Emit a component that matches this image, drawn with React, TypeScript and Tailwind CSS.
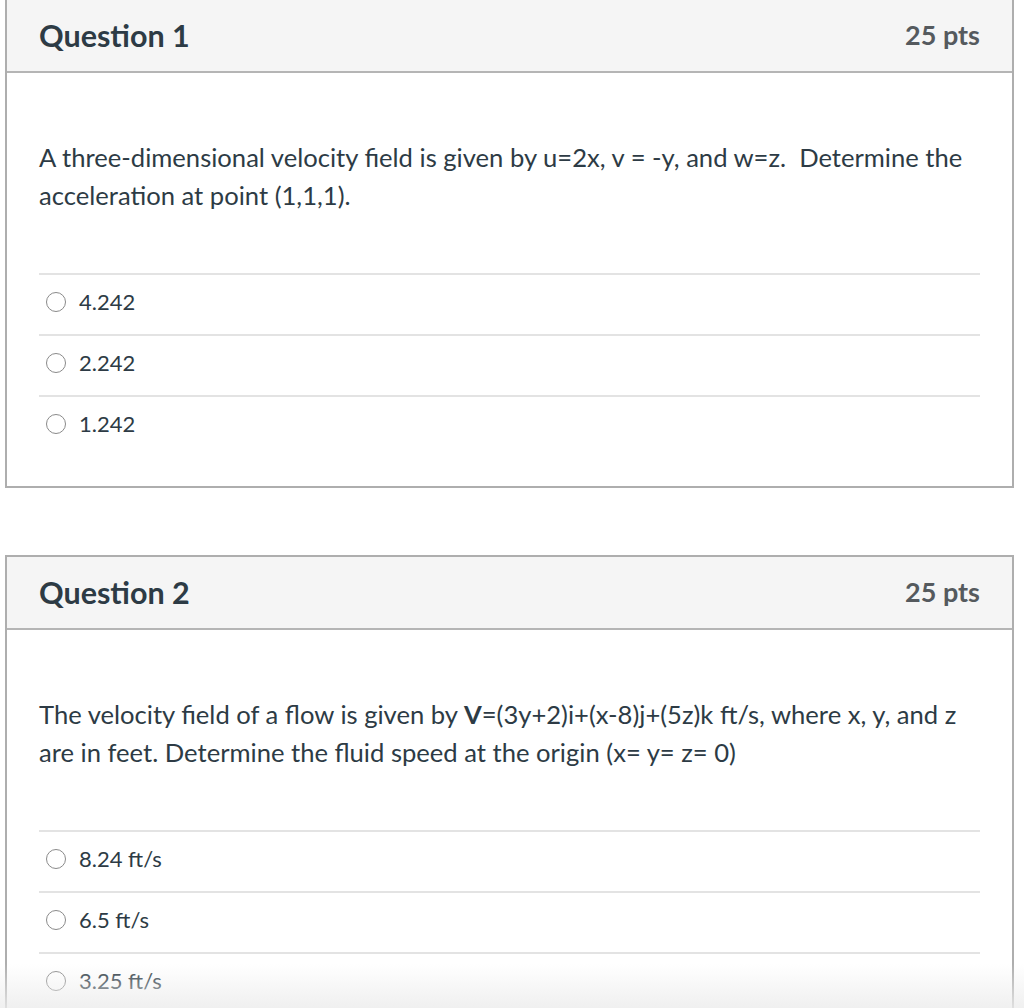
import React from 'react';

interface Question {
  title: string;
  points: string;
  body: React.ReactNode;
  answers: string[];
}

const questions: Question[] = [
  {
    title: 'Question 1',
    points: '25 pts',
    body: (
      <>
        A three-dimensional velocity field is given by u=2x, v = -y, and w=z.&nbsp; Determine the acceleration at point (1,1,1).
      </>
    ),
    answers: ['4.242', '2.242', '1.242'],
  },
  {
    title: 'Question 2',
    points: '25 pts',
    body: (
      <>
        The velocity field of a flow is given by <b>V</b>=(3y+2)i+(x-8)j+(5z)k ft/s, where x, y, and z are in feet. Determine the fluid speed at the origin (x= y= z= 0)
      </>
    ),
    answers: ['8.24 ft/s', '6.5 ft/s', '3.25 ft/s'],
  },
];

const QuestionCard: React.FC<{ q: Question; className?: string }> = ({ q, className = '' }) => (
  <div className={`ml-[5px] w-[1009px] border-2 border-[#aeaeae] bg-white ${className}`}>
    <div className="flex h-[73px] items-center justify-between border-b-2 border-[#b5b5b5] bg-[#f5f5f5] pl-8 pr-[32px]">
      <h2 className="text-[30.5px] font-bold text-[#2d3b45]">{q.title}</h2>
      <span className="text-[27px] font-bold text-[#555a5e]">{q.points}</span>
    </div>
    <div className="px-8 pt-[65px] pb-[30px]">
      <p className="text-[25.6px] leading-[38px] text-[#2d3b45]">{q.body}</p>
      <div className="mt-[59px]">
        {q.answers.map((a) => (
          <div key={a} className="flex h-[61px] items-center border-t-2 border-[#e3e3e3] pb-[6px]">
            <span className="ml-[7px] h-[20px] w-[20px] rounded-full border-[1.5px] border-[#8a8a8a] bg-white" />
            <span className="ml-[13px] text-[22px] text-[#2d3b45]">{a}</span>
          </div>
        ))}
      </div>
    </div>
  </div>
);

export default function App() {
  return (
    <div className="relative h-[1008px] w-[1024px] overflow-hidden bg-white font-['Lato','Liberation_Sans',sans-serif]">
      <QuestionCard q={questions[0]} className="-mt-[2px]" />
      <QuestionCard q={questions[1]} className="mt-[67px]" />
      <div className="pointer-events-none absolute bottom-0 left-0 h-[44px] w-full bg-gradient-to-b from-white/0 to-[#ececec]/80" />
    </div>
  );
}
